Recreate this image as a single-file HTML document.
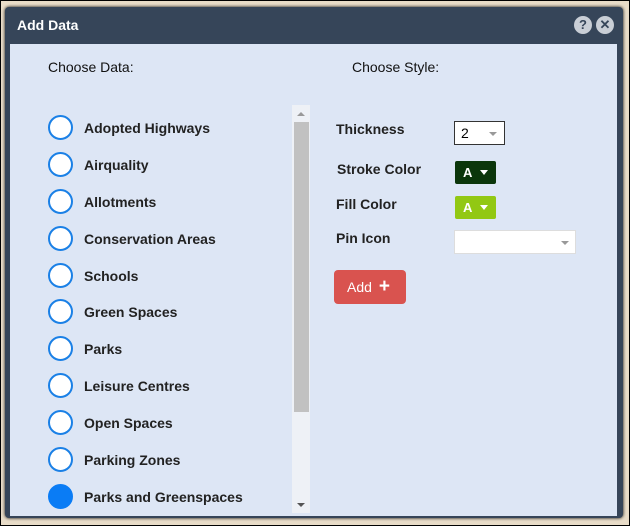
<!DOCTYPE html>
<html><head><style>
body{margin:0;width:630px;height:526px;overflow:hidden;background:#e8dcc8;font-family:"Liberation Sans",Arial,sans-serif;position:relative}
.frame{position:absolute;inset:0;border:1px solid #000;box-sizing:border-box;z-index:5;pointer-events:none}
.dlg{position:absolute;left:5px;top:7px;width:618px;height:511px;background:#364559;border-radius:4px;box-shadow:0 0 3px #000}
.hdr{position:absolute;left:17px;top:17px;color:#fff;font-weight:bold;font-size:14px}
.body{position:absolute;width:607px;height:472px;background:#dde6f5}
.t{position:absolute;font-size:14px;color:#111}
.lbl{position:absolute;font-size:14px;font-weight:bold;color:#222}
.c{position:absolute;left:48px;width:21px;height:21px;border:2.5px solid #1a80e6;border-radius:50%;background:#fff}
.ico{position:absolute;top:16px;width:18px;height:18px;border-radius:50%;background:#c9ced6;color:#364559;font-size:13px;font-weight:bold;text-align:center;line-height:18px}
</style></head><body>
<div class="frame"></div>
<div class="dlg"></div>
<div class="hdr">Add Data</div>
<div class="ico" style="left:574px">?</div>
<div class="ico" style="left:596px">✕</div>
<div class="body" style="left:10px;top:44px"></div>
<div class="t" style="left:48px;top:59px">Choose Data:</div>
<div class="t" style="left:352px;top:59px">Choose Style:</div>
<div style="position:absolute;left:292px;top:105px;width:18px;height:408px;background:#eef1f6"></div>
<div style="position:absolute;left:294px;top:122px;width:15px;height:290px;background:#c1c1c1"></div>
<div style="position:absolute;left:297px;top:112px;border:4px solid transparent;border-bottom:4px solid #999;border-top:0"></div>
<div style="position:absolute;left:297px;top:503px;border:4px solid transparent;border-top:4px solid #555;border-bottom:0"></div>

<div class="c" style="top:115px"></div><div class="lbl" style="left:84px;top:120px">Adopted Highways</div>
<div class="c" style="top:152px"></div><div class="lbl" style="left:84px;top:157px">Airquality</div>
<div class="c" style="top:189px"></div><div class="lbl" style="left:84px;top:194px">Allotments</div>
<div class="c" style="top:226px"></div><div class="lbl" style="left:84px;top:231px">Conservation Areas</div>
<div class="c" style="top:263px"></div><div class="lbl" style="left:84px;top:268px">Schools</div>
<div class="c" style="top:299px"></div><div class="lbl" style="left:84px;top:304px">Green Spaces</div>
<div class="c" style="top:336px"></div><div class="lbl" style="left:84px;top:341px">Parks</div>
<div class="c" style="top:373px"></div><div class="lbl" style="left:84px;top:378px">Leisure Centres</div>
<div class="c" style="top:410px"></div><div class="lbl" style="left:84px;top:415px">Open Spaces</div>
<div class="c" style="top:447px"></div><div class="lbl" style="left:84px;top:452px">Parking Zones</div>
<div class="c" style="top:484px;background:#0a7cf5;border-color:#0a7cf5"></div><div class="lbl" style="left:84px;top:489px">Parks and Greenspaces</div>

<div class="lbl" style="left:336px;top:121px">Thickness</div>
<div style="position:absolute;left:454px;top:121px;width:49px;height:22px;border:1px solid #333;background:#fff;font-size:14px;line-height:22px;box-sizing:content-box"><span style="margin-left:6px">2</span><span style="position:absolute;left:34px;top:10px;border:4px solid transparent;border-top:4px solid #999;border-bottom:0"></span></div>
<div class="lbl" style="left:337px;top:161px">Stroke Color</div>
<div style="position:absolute;left:455px;top:161px;width:41px;height:23px;background:#0b360b;border-radius:2px;color:#fff;font-weight:bold;font-size:13px;line-height:23px"><span style="margin-left:8px">A</span><span style="position:absolute;left:25px;top:9px;border:4px solid transparent;border-top:5px solid #fff;border-bottom:0"></span></div>
<div class="lbl" style="left:336px;top:196px">Fill Color</div>
<div style="position:absolute;left:455px;top:196px;width:41px;height:23px;background:#92c813;border-radius:2px;color:#fff;font-weight:bold;font-size:13px;line-height:23px"><span style="margin-left:8px">A</span><span style="position:absolute;left:25px;top:9px;border:4px solid transparent;border-top:5px solid #fff;border-bottom:0"></span></div>
<div class="lbl" style="left:336px;top:230px">Pin Icon</div>
<div style="position:absolute;left:454px;top:230px;width:122px;height:24px;background:#fff;border:1px solid #ddd;box-sizing:border-box"><span style="position:absolute;left:106px;top:10px;border:4px solid transparent;border-top:4px solid #999;border-bottom:0"></span></div>
<div style="position:absolute;left:334px;top:270px;width:72px;height:34px;background:#d9534f;border-radius:4px;color:#fff;font-size:14px;line-height:34px"><span style="margin-left:13px">Add</span><span style="margin-left:7px;font-weight:bold;font-size:19px">+</span></div>
</body></html>
